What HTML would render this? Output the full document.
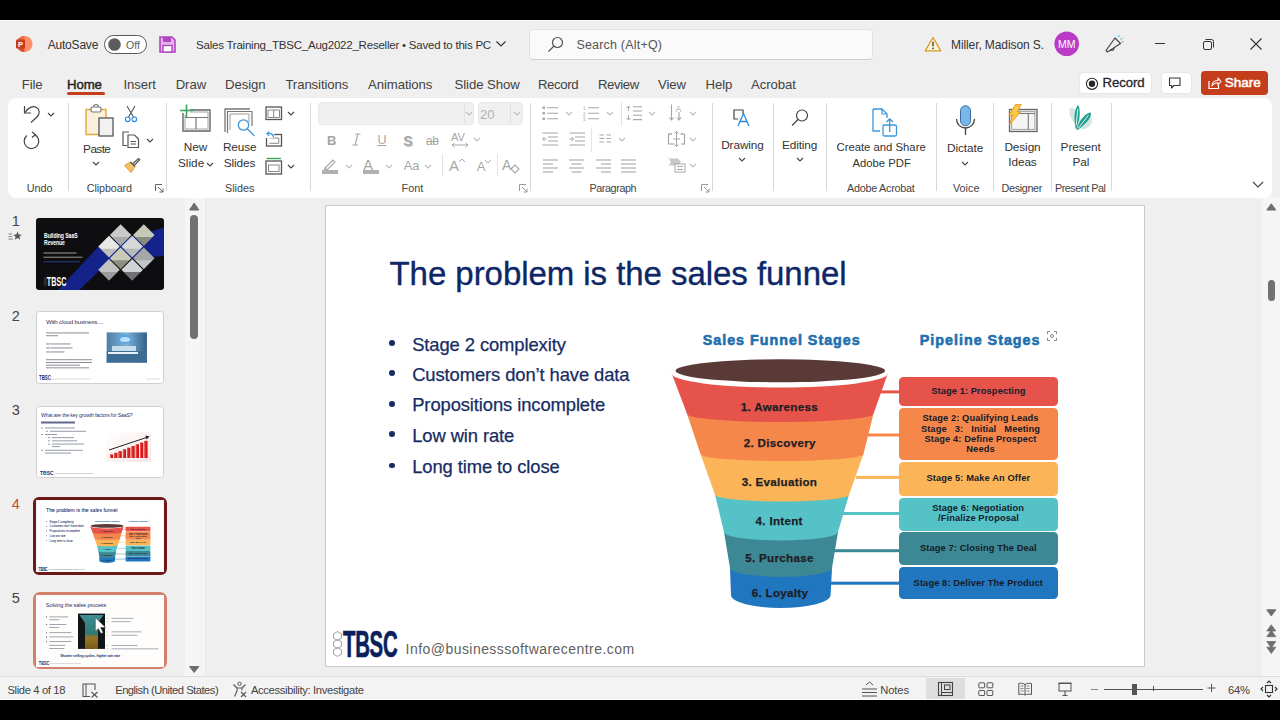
<!DOCTYPE html>
<html><head><meta charset="utf-8"><style>
html,body{margin:0;padding:0;width:1280px;height:720px;overflow:hidden;background:#efefef;font-family:"Liberation Sans", sans-serif;}
.t{position:absolute;white-space:nowrap;}
svg{display:block}
</style></head><body>
<div style="position:absolute;left:0px;top:0px;width:1280px;height:20px;background:#000;"></div><div style="position:absolute;left:0px;top:700px;width:1280px;height:20px;background:#000;"></div><div style="position:absolute;left:0px;top:20px;width:1280px;height:178px;background:#efefef;"></div><div style="position:absolute;left:0px;top:197px;width:1280px;height:480px;background:#efefef;"></div><div style="position:absolute;left:184.5px;top:197px;width:20px;height:480px;background:#f5f5f5;"></div><div style="position:absolute;left:204.5px;top:197px;width:1px;height:480px;background:#e9e9e9;"></div><div style="position:absolute;left:1262px;top:197px;width:18px;height:480px;background:#f5f5f5;"></div><div style="position:absolute;left:8px;top:98px;width:1264px;height:99.5px;background:#fff;border-radius:8px;"></div><svg style="position:absolute;left:15px;top:35px;overflow:visible;" width="18" height="18" viewBox="0 0 18 18"><circle cx="9.5" cy="9" r="8" fill="#ff8f6b"/><path d="M9.5 1 A8 8 0 0 0 1.5 9 L9.5 9 Z" fill="#ed6c47"/><path d="M1.5 9 A8 8 0 0 0 9.5 17 L9.5 9Z" fill="#d35230"/>
<rect x="1" y="4.5" width="9" height="9" rx="1.2" fill="#c43e1c"/><text x="5.5" y="12" font-size="7.5" font-weight="700" fill="#fff" text-anchor="middle" font-family="Liberation Sans">P</text></svg><div class="t" style="left:47.70px;top:38.94px;font-size:12px;line-height:12px;color:#333;font-weight:400;letter-spacing:-0.2px;">AutoSave</div><div style="position:absolute;left:104px;top:34.5px;width:43px;height:19px;background:#fff;border:1px solid #5a5a5a;border-radius:10px;box-sizing:border-box"></div><svg style="position:absolute;left:104px;top:34.5px;overflow:visible;" width="20" height="19" viewBox="0 0 20 19"><circle cx="10.5" cy="9.5" r="6.3" fill="#5c5c5c"/></svg><div class="t" style="left:126.00px;top:39.61px;font-size:10.5px;line-height:10.5px;color:#5c5c5c;font-weight:400;letter-spacing:0px;">Off</div><svg style="position:absolute;left:159px;top:36px;overflow:visible;" width="17" height="17" viewBox="0 0 17 17"><path d="M1 1 H13 L16 4 V16 H1 Z" fill="#e3b4ea" stroke="#b146c2" stroke-width="1.6"/>
<rect x="4" y="1" width="8" height="5" fill="#b146c2"/><rect x="4" y="9.5" width="9" height="6.5" fill="#fff" stroke="#b146c2" stroke-width="1.4"/></svg><div class="t" style="left:196.00px;top:39.57px;font-size:11.5px;line-height:11.5px;color:#333;font-weight:400;letter-spacing:-0.22px;">Sales Training_TBSC_Aug2022_Reseller • Saved to this PC</div><svg style="position:absolute;left:495px;top:40px;overflow:visible;" width="12" height="8" viewBox="0 0 12 8"><path d="M1.5 1.5 L6 6 L10.5 1.5" fill="none" stroke="#333" stroke-width="1.2"/></svg><div style="position:absolute;left:528.5px;top:28.5px;width:344px;height:31px;background:#fafafa;border:1px solid #e3e3e3;border-bottom-color:#cfcfcf;border-radius:4px;box-sizing:border-box"></div><svg style="position:absolute;left:547px;top:36px;overflow:visible;" width="18" height="18" viewBox="0 0 18 18"><circle cx="10.5" cy="6.5" r="5" fill="none" stroke="#555" stroke-width="1.2"/><path d="M7 10 L1.5 15.5" stroke="#555" stroke-width="1.3"/></svg><div class="t" style="left:576.40px;top:38.72px;font-size:12.5px;line-height:12.5px;color:#555;font-weight:400;letter-spacing:0.2px;">Search (Alt+Q)</div><svg style="position:absolute;left:924px;top:36px;overflow:visible;" width="18" height="16" viewBox="0 0 18 16"><path d="M9 1.5 L16.8 14.8 H1.2 Z" fill="#fff4d6" stroke="#d9972a" stroke-width="1.3" stroke-linejoin="round"/><path d="M9 5.8 V10.2" stroke="#333" stroke-width="1.3"/><circle cx="9" cy="12.4" r="0.8" fill="#333"/></svg><div class="t" style="left:951.00px;top:39.14px;font-size:12px;line-height:12px;color:#333;font-weight:400;letter-spacing:-0.1px;">Miller, Madison S.</div><svg style="position:absolute;left:1054px;top:31px;overflow:visible;" width="26" height="26" viewBox="0 0 26 26"><circle cx="12.7" cy="12.7" r="12.3" fill="#b93bc6"/><text x="12.7" y="16.6" font-size="10.5" fill="#fff" text-anchor="middle" font-family="Liberation Sans">MM</text></svg><svg style="position:absolute;left:1104px;top:34px;overflow:visible;" width="21" height="20" viewBox="0 0 21 20"><path d="M2 16.5 L11 4 L16.5 9.5 L3.5 18 Z" fill="none" stroke="#444" stroke-width="1.2" stroke-linejoin="round"/><path d="M6.2 15.8 A2.2 2.2 0 0 0 10 14" fill="none" stroke="#444" stroke-width="1.1"/>
<path d="M14.2 3.2 L15.2 1.2 M16.4 5.4 L18.4 4.2 M17.5 8 L19.6 7.8" stroke="#4aa8e0" stroke-width="1"/></svg><div style="position:absolute;left:1154.7px;top:43px;width:10.5px;height:1px;background:#333;"></div><svg style="position:absolute;left:1202px;top:38px;overflow:visible;" width="13" height="12" viewBox="0 0 13 12"><rect x="1.5" y="3.5" width="8" height="8" rx="1.5" fill="none" stroke="#333" stroke-width="1"/><path d="M3.5 1.5 H9.5 A2 2 0 0 1 11.5 3.5 V9.5" fill="none" stroke="#333" stroke-width="1"/></svg><svg style="position:absolute;left:1249px;top:37px;overflow:visible;" width="14" height="14" viewBox="0 0 14 14"><path d="M1.5 1.5 L12.5 12.5 M12.5 1.5 L1.5 12.5" stroke="#333" stroke-width="1.1"/></svg><div class="t" style="left:21.70px;top:77.53px;font-size:13.2px;line-height:13.2px;color:#424242;font-weight:400;letter-spacing:-0.1px;">File</div><div class="t" style="left:67.00px;top:77.53px;font-size:13.2px;line-height:13.2px;color:#262626;font-weight:400;letter-spacing:-0.1px;-webkit-text-stroke:0.45px #262626;">Home</div><div class="t" style="left:123.50px;top:77.53px;font-size:13.2px;line-height:13.2px;color:#424242;font-weight:400;letter-spacing:-0.1px;">Insert</div><div class="t" style="left:175.70px;top:77.53px;font-size:13.2px;line-height:13.2px;color:#424242;font-weight:400;letter-spacing:-0.1px;">Draw</div><div class="t" style="left:225.00px;top:77.53px;font-size:13.2px;line-height:13.2px;color:#424242;font-weight:400;letter-spacing:-0.1px;">Design</div><div class="t" style="left:285.40px;top:77.53px;font-size:13.2px;line-height:13.2px;color:#424242;font-weight:400;letter-spacing:-0.1px;">Transitions</div><div class="t" style="left:368.00px;top:77.53px;font-size:13.2px;line-height:13.2px;color:#424242;font-weight:400;letter-spacing:-0.1px;">Animations</div><div class="t" style="left:454.60px;top:77.53px;font-size:13.2px;line-height:13.2px;color:#424242;font-weight:400;letter-spacing:-0.1px;">Slide Show</div><div class="t" style="left:538.00px;top:77.53px;font-size:13.2px;line-height:13.2px;color:#424242;font-weight:400;letter-spacing:-0.4px;">Record</div><div class="t" style="left:598.00px;top:77.53px;font-size:13.2px;line-height:13.2px;color:#424242;font-weight:400;letter-spacing:-0.4px;">Review</div><div class="t" style="left:658.00px;top:77.53px;font-size:13.2px;line-height:13.2px;color:#424242;font-weight:400;letter-spacing:-0.1px;">View</div><div class="t" style="left:705.60px;top:77.53px;font-size:13.2px;line-height:13.2px;color:#424242;font-weight:400;letter-spacing:-0.1px;">Help</div><div class="t" style="left:751.00px;top:77.53px;font-size:13.2px;line-height:13.2px;color:#424242;font-weight:400;letter-spacing:-0.1px;">Acrobat</div><div style="position:absolute;left:67px;top:92px;width:37.6px;height:2.6px;background:#c43e1c;border-radius:1.5px"></div><div style="position:absolute;left:1078.6px;top:71.7px;width:73.4px;height:22.6px;background:#fff;border:1px solid #e6e6e6;border-radius:4px;box-sizing:border-box"></div><svg style="position:absolute;left:1085px;top:76.5px;overflow:visible;" width="14" height="14" viewBox="0 0 14 14"><circle cx="7" cy="6.8" r="5.6" fill="none" stroke="#262626" stroke-width="1.1"/><circle cx="7" cy="6.8" r="3.2" fill="#262626"/></svg><div class="t" style="left:1102.60px;top:76.13px;font-size:13.2px;line-height:13.2px;color:#262626;font-weight:400;letter-spacing:-0.1px;-webkit-text-stroke:0.3px #262626;">Record</div><div style="position:absolute;left:1161.4px;top:71.7px;width:30.6px;height:22.6px;background:#fff;border:1px solid #e6e6e6;border-radius:4px;box-sizing:border-box"></div><svg style="position:absolute;left:1168px;top:77px;overflow:visible;" width="14" height="12" viewBox="0 0 14 12"><path d="M1.5 1 H12 V8.5 H6 L3.5 11 V8.5 H1.5 Z" fill="none" stroke="#333" stroke-width="1.1" stroke-linejoin="round"/></svg><div style="position:absolute;left:1201px;top:71px;width:67px;height:23.6px;background:#c43e1c;border-radius:4px"></div><svg style="position:absolute;left:1207px;top:76px;overflow:visible;" width="14" height="14" viewBox="0 0 14 14"><path d="M2 5 V12.5 H11.5 V9" fill="none" stroke="#fff" stroke-width="1.2"/><path d="M5 10 C5 6 8 4.5 11 4.5 V2 L14 5.5 L11 9 V6.7 C8.5 6.7 6.5 7.5 5 10Z" fill="none" stroke="#fff" stroke-width="1.1" stroke-linejoin="round"/></svg><div class="t" style="left:1224.70px;top:76.37px;font-size:13.5px;line-height:13.5px;color:#fff;font-weight:400;letter-spacing:0px;-webkit-text-stroke:0.5px #fff;">Share</div><div style="position:absolute;left:67.5px;top:102.5px;width:1px;height:88.5px;background:#d9d9d9;"></div><div style="position:absolute;left:166px;top:102.5px;width:1px;height:88.5px;background:#d9d9d9;"></div><div style="position:absolute;left:309.5px;top:102.5px;width:1px;height:88.5px;background:#d9d9d9;"></div><div style="position:absolute;left:530px;top:102.5px;width:1px;height:88.5px;background:#d9d9d9;"></div><div style="position:absolute;left:712.3px;top:102.5px;width:1px;height:88.5px;background:#d9d9d9;"></div><div style="position:absolute;left:773px;top:102.5px;width:1px;height:88.5px;background:#d9d9d9;"></div><div style="position:absolute;left:826.4px;top:102.5px;width:1px;height:88.5px;background:#d9d9d9;"></div><div style="position:absolute;left:935.5px;top:102.5px;width:1px;height:88.5px;background:#d9d9d9;"></div><div style="position:absolute;left:993.4px;top:102.5px;width:1px;height:88.5px;background:#d9d9d9;"></div><div style="position:absolute;left:1051px;top:102.5px;width:1px;height:88.5px;background:#d9d9d9;"></div><div style="position:absolute;left:1110.5px;top:102.5px;width:1px;height:88.5px;background:#d9d9d9;"></div><div class="t" style="left:26.70px;top:183.26px;font-size:10.8px;line-height:10.8px;color:#444;font-weight:400;letter-spacing:0px;">Undo</div><div class="t" style="left:86.70px;top:183.26px;font-size:10.8px;line-height:10.8px;color:#444;font-weight:400;letter-spacing:-0.1px;">Clipboard</div><svg style="position:absolute;left:155px;top:184px;overflow:visible;" width="9" height="9" viewBox="0 0 9 9"><path d="M0.5 7 V0.5 H7" fill="none" stroke="#666" stroke-width="1"/><path d="M3 3 L8 8 M8 4.5 V8 H4.5" fill="none" stroke="#666" stroke-width="1"/></svg><div class="t" style="left:225.00px;top:183.26px;font-size:10.8px;line-height:10.8px;color:#444;font-weight:400;letter-spacing:0px;">Slides</div><div class="t" style="left:401.60px;top:183.26px;font-size:10.8px;line-height:10.8px;color:#444;font-weight:400;letter-spacing:0px;">Font</div><svg style="position:absolute;left:518.5px;top:184px;overflow:visible;" width="9" height="9" viewBox="0 0 9 9"><path d="M0.5 7 V0.5 H7" fill="none" stroke="#999" stroke-width="1"/><path d="M3 3 L8 8 M8 4.5 V8 H4.5" fill="none" stroke="#999" stroke-width="1"/></svg><div class="t" style="left:589.40px;top:183.26px;font-size:10.8px;line-height:10.8px;color:#444;font-weight:400;letter-spacing:-0.4px;">Paragraph</div><svg style="position:absolute;left:700.7px;top:184px;overflow:visible;" width="9" height="9" viewBox="0 0 9 9"><path d="M0.5 7 V0.5 H7" fill="none" stroke="#999" stroke-width="1"/><path d="M3 3 L8 8 M8 4.5 V8 H4.5" fill="none" stroke="#999" stroke-width="1"/></svg><div class="t" style="left:847.00px;top:183.26px;font-size:10.8px;line-height:10.8px;color:#444;font-weight:400;letter-spacing:-0.25px;">Adobe Acrobat</div><div class="t" style="left:953.00px;top:183.26px;font-size:10.8px;line-height:10.8px;color:#444;font-weight:400;letter-spacing:0px;">Voice</div><div class="t" style="left:1001.60px;top:183.26px;font-size:10.8px;line-height:10.8px;color:#444;font-weight:400;letter-spacing:-0.35px;">Designer</div><div class="t" style="left:1055.00px;top:183.26px;font-size:10.8px;line-height:10.8px;color:#444;font-weight:400;letter-spacing:-0.5px;">Present Pal</div><svg style="position:absolute;left:1251.7px;top:180.5px;overflow:visible;" width="12" height="7.0" viewBox="0 0 12 7.0"><path d="M1 1 L6.0 6.0 L11 1" fill="none" stroke="#444" stroke-width="1.1"/></svg><svg style="position:absolute;left:22px;top:104px;overflow:visible;" width="20" height="20" viewBox="0 0 20 20"><path d="M2.5 2 V9 H9" fill="none" stroke="#444" stroke-width="1.2"/><path d="M3 8.5 C6 3.5 11 1.5 14.5 3.5 C18 5.5 18 10 15 13 L9 18.5" fill="none" stroke="#444" stroke-width="1.2"/></svg><svg style="position:absolute;left:46.7px;top:111.5px;overflow:visible;" width="8" height="5.0" viewBox="0 0 8 5.0"><path d="M1 1 L4.0 4.0 L7 1" fill="none" stroke="#444" stroke-width="1.1"/></svg><svg style="position:absolute;left:22px;top:130px;overflow:visible;" width="20" height="20" viewBox="0 0 20 20"><path d="M10 2 L13.5 4.5 L10 7.5" fill="none" stroke="#444" stroke-width="1.2"/><path d="M12.5 4.6 A7.3 7.3 0 1 1 5 5.5" fill="none" stroke="#444" stroke-width="1.2"/></svg><svg style="position:absolute;left:84px;top:105px;overflow:visible;" width="31" height="33" viewBox="0 0 31 33"><path d="M2 4.5 H22 V29.5 H2 Z" fill="#fbf0dc" stroke="#e0a73d" stroke-width="1.4"/>
<rect x="7" y="2" width="10" height="5" rx="1.5" fill="#fff" stroke="#777" stroke-width="1.2"/><path d="M9.5 2 A2.5 2.5 0 0 1 14.5 2" fill="none" stroke="#777" stroke-width="1.2"/>
<rect x="15" y="13" width="14" height="18" fill="#f2f2f2" stroke="#555" stroke-width="1.3"/></svg><div class="t" style="left:-203.30px;width:600px;text-align:center;top:143.51px;font-size:11.8px;line-height:11.8px;color:#333;font-weight:400;letter-spacing:-0.6px;">Paste</div><svg style="position:absolute;left:92.0px;top:161.0px;overflow:visible;" width="8" height="5.0" viewBox="0 0 8 5.0"><path d="M1 1 L4.0 4.0 L7 1" fill="none" stroke="#444" stroke-width="1.1"/></svg><svg style="position:absolute;left:124px;top:105px;overflow:visible;" width="14" height="18" viewBox="0 0 14 18"><path d="M3 1 L9.5 12 M11 1 L4.5 12" stroke="#555" stroke-width="1.1"/><circle cx="3.7" cy="14.3" r="2.3" fill="none" stroke="#2b88d8" stroke-width="1.1"/><circle cx="10.3" cy="14.3" r="2.3" fill="none" stroke="#2b88d8" stroke-width="1.1"/></svg><svg style="position:absolute;left:122px;top:131px;overflow:visible;" width="18" height="18" viewBox="0 0 18 18"><path d="M5 14.5 H1 V1 H7" fill="none" stroke="#555" stroke-width="1.2"/><path d="M6 4 H12.5 L16.5 8 V16.5 H6 Z" fill="#fff" stroke="#555" stroke-width="1.2"/><path d="M8.5 10.5 H14 M8.5 13 H14" stroke="#555" stroke-width="1"/></svg><svg style="position:absolute;left:146.0px;top:137.5px;overflow:visible;" width="8" height="5.0" viewBox="0 0 8 5.0"><path d="M1 1 L4.0 4.0 L7 1" fill="none" stroke="#444" stroke-width="1.1"/></svg><svg style="position:absolute;left:123px;top:157px;overflow:visible;" width="18" height="17" viewBox="0 0 18 17"><path d="M1.5 8.5 L8 15.5 L12 9.5 L7.5 5 Z" fill="#f5c26b" stroke="#e0962d" stroke-width="1"/><path d="M7.5 5 L12 9.5" stroke="#555" stroke-width="1.3"/><path d="M10 6.5 L15.5 1.5 L16.8 2.8 L11.5 8" fill="none" stroke="#555" stroke-width="1.2"/></svg><svg style="position:absolute;left:179px;top:104px;overflow:visible;" width="33" height="29" viewBox="0 0 33 29"><path d="M4 9 V27 H31 V6 H11" fill="none" stroke="#666" stroke-width="1.4"/><path d="M6 11 V25 H29 V8 H11" fill="none" stroke="#999" stroke-width="0.9"/>
<path d="M6 13.5 H29 M17 13.5 V25" stroke="#777" stroke-width="1.2"/>
<path d="M7.5 0.5 V13 M1 6.5 H14" stroke="#3ca55c" stroke-width="1.6"/></svg><div class="t" style="left:-104.50px;width:600px;text-align:center;top:141.81px;font-size:11.8px;line-height:11.8px;color:#333;font-weight:400;letter-spacing:0px;">New</div><div class="t" style="left:178.00px;top:157.91px;font-size:11.8px;line-height:11.8px;color:#333;font-weight:400;letter-spacing:0px;">Slide</div><svg style="position:absolute;left:205.5px;top:161.5px;overflow:visible;" width="8" height="5.0" viewBox="0 0 8 5.0"><path d="M1 1 L4.0 4.0 L7 1" fill="none" stroke="#444" stroke-width="1.1"/></svg><svg style="position:absolute;left:224px;top:108px;overflow:visible;" width="32" height="30" viewBox="0 0 32 30"><path d="M1 24 V1 H26" fill="none" stroke="#777" stroke-width="1.3"/><path d="M3.5 25 V3.5 H28 V18" fill="none" stroke="#777" stroke-width="1.2"/>
<path d="M6 22 V6 H25 V14" fill="none" stroke="#999" stroke-width="1"/>
<circle cx="19.5" cy="17" r="5.2" fill="#fff" stroke="#3a96dd" stroke-width="1.3"/><path d="M23.3 20.8 L30.5 28" stroke="#3a96dd" stroke-width="1.3"/></svg><div class="t" style="left:-60.30px;width:600px;text-align:center;top:141.81px;font-size:11.8px;line-height:11.8px;color:#333;font-weight:400;letter-spacing:-0.1px;">Reuse</div><div class="t" style="left:-60.50px;width:600px;text-align:center;top:157.91px;font-size:11.8px;line-height:11.8px;color:#333;font-weight:400;letter-spacing:-0.1px;">Slides</div><svg style="position:absolute;left:265px;top:106px;overflow:visible;" width="18" height="15" viewBox="0 0 18 15"><rect x="1" y="1" width="15.5" height="12.5" fill="none" stroke="#555" stroke-width="1.3"/><path d="M3 4 H14.5 M3 4 V11.5 H14.5 V4 M8.7 4 V11.5" fill="none" stroke="#888" stroke-width="1"/></svg><svg style="position:absolute;left:286.7px;top:110.5px;overflow:visible;" width="8" height="5.0" viewBox="0 0 8 5.0"><path d="M1 1 L4.0 4.0 L7 1" fill="none" stroke="#444" stroke-width="1.1"/></svg><svg style="position:absolute;left:265px;top:131px;overflow:visible;" width="18" height="16" viewBox="0 0 18 16"><rect x="1.5" y="3.5" width="15" height="11.5" fill="none" stroke="#555" stroke-width="1.3"/><path d="M4.5 7 H13.8 V12.3 H4.5" fill="none" stroke="#888" stroke-width="1"/><rect x="0" y="0" width="9" height="7" fill="#fff"/><path d="M8.5 6.5 C8.5 3.5 6 1.8 2.2 2.6" fill="none" stroke="#3a96dd" stroke-width="1.2"/><path d="M4.2 0.6 L2 2.6 L4.2 4.8" fill="none" stroke="#3a96dd" stroke-width="1.2"/></svg><svg style="position:absolute;left:265px;top:157px;overflow:visible;" width="18" height="18" viewBox="0 0 18 18"><path d="M1.5 1.5 H16" stroke="#3ca55c" stroke-width="1.4"/><rect x="1" y="4" width="15.5" height="13" fill="none" stroke="#555" stroke-width="1.3"/><rect x="3.5" y="8" width="10.5" height="6.5" fill="none" stroke="#888" stroke-width="1"/></svg><svg style="position:absolute;left:286.7px;top:163.5px;overflow:visible;" width="8" height="5.0" viewBox="0 0 8 5.0"><path d="M1 1 L4.0 4.0 L7 1" fill="none" stroke="#444" stroke-width="1.1"/></svg><div style="position:absolute;left:318px;top:102.3px;width:156.4px;height:22.7px;background:#f0f0f0;border-radius:4px;border:1px solid #e8e8e8;box-sizing:border-box"></div><div style="position:absolute;left:463.6px;top:104px;width:1px;height:19px;background:#e3e3e3;"></div><svg style="position:absolute;left:465.0px;top:111.0px;overflow:visible;" width="8" height="5.0" viewBox="0 0 8 5.0"><path d="M1 1 L4.0 4.0 L7 1" fill="none" stroke="#bdbdbd" stroke-width="1.1"/></svg><div style="position:absolute;left:477.5px;top:102.3px;width:45.1px;height:22.7px;background:#f0f0f0;border-radius:4px;border:1px solid #e8e8e8;box-sizing:border-box"></div><div style="position:absolute;left:510px;top:104px;width:1px;height:19px;background:#e3e3e3;"></div><svg style="position:absolute;left:512.6px;top:111.0px;overflow:visible;" width="8" height="5.0" viewBox="0 0 8 5.0"><path d="M1 1 L4.0 4.0 L7 1" fill="none" stroke="#bdbdbd" stroke-width="1.1"/></svg><div class="t" style="left:480.00px;top:108.20px;font-size:13px;line-height:13px;color:#b0b0b0;font-weight:400;letter-spacing:0px;">20</div><div class="t" style="left:327.00px;top:134.40px;font-size:13px;line-height:13px;color:#a6a6a6;font-weight:700;letter-spacing:0px;">B</div><svg style="position:absolute;left:352px;top:132.5px;overflow:visible;" width="9" height="13" viewBox="0 0 9 13"><path d="M3.2 1 H8.5 M0.5 12 H5.8 M5.8 1 L3.2 12" fill="none" stroke="#a6a6a6" stroke-width="1.1"/></svg><div class="t" style="left:377.40px;top:134.32px;font-size:12.5px;line-height:12.5px;color:#a6a6a6;font-weight:400;letter-spacing:0px;text-decoration:underline;">U</div><div class="t" style="left:403.20px;top:134.05px;font-size:14px;line-height:14px;color:#a6a6a6;font-weight:700;letter-spacing:0px;text-shadow:1px 1px 1px #ccc;">S</div><div class="t" style="left:426.00px;top:134.74px;font-size:12px;line-height:12px;color:#a6a6a6;font-weight:400;letter-spacing:-0.5px;text-decoration:line-through;">ab</div><svg style="position:absolute;left:451px;top:131px;overflow:visible;" width="18" height="17" viewBox="0 0 18 17"><text x="0" y="10" font-size="11" fill="#a6a6a6" font-family="Liberation Sans">AV</text><path d="M1 14 H17 M3.5 11.8 L1 14 L3.5 16.2 M14.5 11.8 L17 14 L14.5 16.2" fill="none" stroke="#a6a6a6" stroke-width="1"/></svg><svg style="position:absolute;left:473.0px;top:137.0px;overflow:visible;" width="8" height="5.0" viewBox="0 0 8 5.0"><path d="M1 1 L4.0 4.0 L7 1" fill="none" stroke="#bdbdbd" stroke-width="1.1"/></svg><svg style="position:absolute;left:321px;top:157px;overflow:visible;" width="18" height="18" viewBox="0 0 18 18"><path d="M4 11 L12 3 L14 5 L6 13 Z M4 11 L3 14 L6 13" fill="none" stroke="#a6a6a6" stroke-width="1.1"/></svg><div style="position:absolute;left:322px;top:170px;width:16px;height:3.6px;background:#b0b0b0;"></div><svg style="position:absolute;left:344.6px;top:163.5px;overflow:visible;" width="8" height="5.0" viewBox="0 0 8 5.0"><path d="M1 1 L4.0 4.0 L7 1" fill="none" stroke="#bdbdbd" stroke-width="1.1"/></svg><div class="t" style="left:363.30px;top:157.63px;font-size:14.5px;line-height:14.5px;color:#a6a6a6;font-weight:400;letter-spacing:0px;">A</div><div style="position:absolute;left:363px;top:170px;width:15.7px;height:3.6px;background:#b0b0b0;"></div><svg style="position:absolute;left:385.0px;top:163.5px;overflow:visible;" width="8" height="5.0" viewBox="0 0 8 5.0"><path d="M1 1 L4.0 4.0 L7 1" fill="none" stroke="#bdbdbd" stroke-width="1.1"/></svg><div class="t" style="left:403.80px;top:160.06px;font-size:12.8px;line-height:12.8px;color:#a6a6a6;font-weight:400;letter-spacing:-0.2px;">Aa</div><svg style="position:absolute;left:423.7px;top:163.5px;overflow:visible;" width="8" height="5.0" viewBox="0 0 8 5.0"><path d="M1 1 L4.0 4.0 L7 1" fill="none" stroke="#bdbdbd" stroke-width="1.1"/></svg><div style="position:absolute;left:441.7px;top:154px;width:1px;height:22px;background:#e3e3e3;"></div><div class="t" style="left:449.00px;top:158.20px;font-size:15px;line-height:15px;color:#a6a6a6;font-weight:400;letter-spacing:0px;">A</div><svg style="position:absolute;left:458px;top:158px;overflow:visible;" width="8" height="5" viewBox="0 0 8 5"><path d="M1 4 L4 1 L7 4" fill="none" stroke="#aaa" stroke-width="1"/></svg><div class="t" style="left:476.80px;top:159.90px;font-size:13px;line-height:13px;color:#a6a6a6;font-weight:400;letter-spacing:0px;">A</div><svg style="position:absolute;left:484px;top:159px;overflow:visible;" width="8" height="5" viewBox="0 0 8 5"><path d="M1 1 L4 4 L7 1" fill="none" stroke="#aaa" stroke-width="1"/></svg><div style="position:absolute;left:497px;top:154px;width:1px;height:22px;background:#e3e3e3;"></div><svg style="position:absolute;left:502px;top:157px;overflow:visible;" width="18" height="17" viewBox="0 0 18 17"><text x="0" y="13" font-size="14" fill="#a6a6a6" font-family="Liberation Sans">A</text><path d="M9 12 L13 8 L17 12 L13 16 Z" fill="#fff" stroke="#a6a6a6" stroke-width="1.1"/></svg><svg style="position:absolute;left:542px;top:106px;overflow:visible;" width="17" height="14" viewBox="0 0 17 14"><rect x="0.5" y="0.5" width="2.5" height="2.5" fill="#aaa"/><rect x="0.5" y="6" width="2.5" height="2.5" fill="#aaa"/><rect x="0.5" y="11.5" width="2.5" height="2.5" fill="#aaa"/><path d="M5 1.7 H16 M5 7.2 H16 M5 12.7 H16" stroke="#a6a6a6" stroke-width="1.1"/></svg><svg style="position:absolute;left:565.3px;top:111.0px;overflow:visible;" width="8" height="5.0" viewBox="0 0 8 5.0"><path d="M1 1 L4.0 4.0 L7 1" fill="none" stroke="#bdbdbd" stroke-width="1.1"/></svg><svg style="position:absolute;left:583px;top:106px;overflow:visible;" width="17" height="14" viewBox="0 0 17 14"><text x="0" y="4" font-size="4.5" fill="#aaa" font-family="Liberation Sans">1</text><text x="0" y="9.5" font-size="4.5" fill="#aaa" font-family="Liberation Sans">2</text><text x="0" y="15" font-size="4.5" fill="#aaa" font-family="Liberation Sans">3</text><path d="M5 1.7 H16 M5 7.2 H16 M5 12.7 H16" stroke="#a6a6a6" stroke-width="1.1"/></svg><svg style="position:absolute;left:606.0px;top:111.0px;overflow:visible;" width="8" height="5.0" viewBox="0 0 8 5.0"><path d="M1 1 L4.0 4.0 L7 1" fill="none" stroke="#bdbdbd" stroke-width="1.1"/></svg><div style="position:absolute;left:620.5px;top:102px;width:1px;height:24px;background:#e3e3e3;"></div><svg style="position:absolute;left:626px;top:105px;overflow:visible;" width="17" height="16" viewBox="0 0 17 16"><path d="M2.5 1 V6 M0.5 3 L2.5 1 L4.5 3 M2.5 10 V15 M0.5 13 L2.5 15 L4.5 13" fill="none" stroke="#a6a6a6" stroke-width="1"/><path d="M7 1.7 H16 M7 6 H16 M7 10.3 H16 M7 14.6 H16" stroke="#a6a6a6" stroke-width="1.1"/></svg><svg style="position:absolute;left:647.7px;top:111.0px;overflow:visible;" width="8" height="5.0" viewBox="0 0 8 5.0"><path d="M1 1 L4.0 4.0 L7 1" fill="none" stroke="#bdbdbd" stroke-width="1.1"/></svg><svg style="position:absolute;left:669px;top:104px;overflow:visible;" width="17" height="18" viewBox="0 0 17 18"><path d="M2.5 0.5 V16 M0.2 13.5 L2.5 16 L4.8 13.5 M10 8 V16 M7.8 13.5 L10 16 L12.2 13.5" fill="none" stroke="#a6a6a6" stroke-width="1.1"/><text x="6.5" y="8" font-size="9" fill="#b0b0b0" font-family="Liberation Sans">A</text></svg><svg style="position:absolute;left:689.0px;top:111.0px;overflow:visible;" width="8" height="5.0" viewBox="0 0 8 5.0"><path d="M1 1 L4.0 4.0 L7 1" fill="none" stroke="#bdbdbd" stroke-width="1.1"/></svg><svg style="position:absolute;left:542px;top:132px;overflow:visible;" width="17" height="14" viewBox="0 0 17 14"><path d="M0.5 1 H16 M6 5 H16 M6 9 H16 M0.5 13 H16" stroke="#a6a6a6" stroke-width="1.1"/><path d="M4.5 7 H0.7 M2.5 5 L0.7 7 L2.5 9" fill="none" stroke="#a6a6a6" stroke-width="1"/></svg><svg style="position:absolute;left:569px;top:132px;overflow:visible;" width="17" height="14" viewBox="0 0 17 14"><path d="M0.5 1 H16 M6 5 H16 M6 9 H16 M0.5 13 H16" stroke="#a6a6a6" stroke-width="1.1"/><path d="M0.5 7 H4.5 M2.7 5 L4.5 7 L2.7 9" fill="none" stroke="#a6a6a6" stroke-width="1"/></svg><div style="position:absolute;left:590.6px;top:128px;width:1px;height:24px;background:#e3e3e3;"></div><svg style="position:absolute;left:599px;top:134px;overflow:visible;" width="13" height="10" viewBox="0 0 13 10"><path d="M0.5 1 H5 M0.5 4.5 H5 M0.5 8 H5 M7.5 1 H12 M7.5 4.5 H12 M7.5 8 H12" stroke="#a6a6a6" stroke-width="1"/></svg><svg style="position:absolute;left:618.0px;top:136.5px;overflow:visible;" width="8" height="5.0" viewBox="0 0 8 5.0"><path d="M1 1 L4.0 4.0 L7 1" fill="none" stroke="#bdbdbd" stroke-width="1.1"/></svg><svg style="position:absolute;left:668px;top:131px;overflow:visible;" width="17" height="16" viewBox="0 0 17 16"><rect x="0.5" y="3" width="16" height="10" fill="none" stroke="#a6a6a6" stroke-width="1" stroke-dasharray="3 9"/><path d="M0.5 3 V13 H4 M16.5 3 V13 H13 M0.5 3 H4 M16.5 3 H13" fill="none" stroke="#a6a6a6" stroke-width="1.2"/><path d="M8.5 0.5 V15.5 M6.5 2.5 L8.5 0.5 L10.5 2.5 M6.5 13.5 L8.5 15.5 L10.5 13.5 M5 8 H12" fill="none" stroke="#a6a6a6" stroke-width="1"/></svg><svg style="position:absolute;left:689.0px;top:136.5px;overflow:visible;" width="8" height="5.0" viewBox="0 0 8 5.0"><path d="M1 1 L4.0 4.0 L7 1" fill="none" stroke="#bdbdbd" stroke-width="1.1"/></svg><svg style="position:absolute;left:542.5px;top:159px;overflow:visible;" width="16" height="15" viewBox="0 0 16 15"><path d="M0 1 H15" stroke="#a6a6a6" stroke-width="1.1"/><path d="M0 5 H10" stroke="#a6a6a6" stroke-width="1.1"/><path d="M0 9 H15" stroke="#a6a6a6" stroke-width="1.1"/><path d="M0 13 H10" stroke="#a6a6a6" stroke-width="1.1"/></svg><svg style="position:absolute;left:569.3px;top:159px;overflow:visible;" width="16" height="15" viewBox="0 0 16 15"><path d="M0 1 H15" stroke="#a6a6a6" stroke-width="1.1"/><path d="M2.5 5 H12.5" stroke="#a6a6a6" stroke-width="1.1"/><path d="M0 9 H15" stroke="#a6a6a6" stroke-width="1.1"/><path d="M2.5 13 H12.5" stroke="#a6a6a6" stroke-width="1.1"/></svg><svg style="position:absolute;left:595.6px;top:159px;overflow:visible;" width="16" height="15" viewBox="0 0 16 15"><path d="M0 1 H15" stroke="#a6a6a6" stroke-width="1.1"/><path d="M5 5 H15" stroke="#a6a6a6" stroke-width="1.1"/><path d="M0 9 H15" stroke="#a6a6a6" stroke-width="1.1"/><path d="M5 13 H15" stroke="#a6a6a6" stroke-width="1.1"/></svg><svg style="position:absolute;left:621.4px;top:159px;overflow:visible;" width="16" height="15" viewBox="0 0 16 15"><path d="M0 1 H15" stroke="#a6a6a6" stroke-width="1.1"/><path d="M0 5 H15" stroke="#a6a6a6" stroke-width="1.1"/><path d="M0 9 H15" stroke="#a6a6a6" stroke-width="1.1"/><path d="M0 13 H15" stroke="#a6a6a6" stroke-width="1.1"/></svg><svg style="position:absolute;left:668px;top:157px;overflow:visible;" width="18" height="16" viewBox="0 0 18 16"><path d="M0.5 1.5 H10 L13 5 L10 8.5 H0.5 L3 5 Z" fill="#c8c8c8"/><rect x="7" y="7" width="10" height="8" fill="#fff" stroke="#a6a6a6" stroke-width="1"/><path d="M9 9.5 H15 M9 12.5 H15" stroke="#a6a6a6" stroke-width="1"/></svg><svg style="position:absolute;left:689.0px;top:162.5px;overflow:visible;" width="8" height="5.0" viewBox="0 0 8 5.0"><path d="M1 1 L4.0 4.0 L7 1" fill="none" stroke="#bdbdbd" stroke-width="1.1"/></svg><svg style="position:absolute;left:733px;top:109px;overflow:visible;" width="19" height="18" viewBox="0 0 19 18"><path d="M5 10 H1 V1 H10 V5" fill="none" stroke="#444" stroke-width="1.2"/><path d="M5 17 L10.5 4.5 L16 17 M7 12.5 H14" fill="none" stroke="#2b88d8" stroke-width="1.3"/></svg><div class="t" style="left:442.50px;width:600px;text-align:center;top:140.31px;font-size:11.8px;line-height:11.8px;color:#333;font-weight:400;letter-spacing:-0.1px;">Drawing</div><svg style="position:absolute;left:738.3px;top:157.3px;overflow:visible;" width="8" height="5.0" viewBox="0 0 8 5.0"><path d="M1 1 L4.0 4.0 L7 1" fill="none" stroke="#444" stroke-width="1.1"/></svg><svg style="position:absolute;left:791px;top:109px;overflow:visible;" width="18" height="17" viewBox="0 0 18 17"><circle cx="11" cy="6.5" r="5.5" fill="none" stroke="#444" stroke-width="1.2"/><path d="M7 10.5 L1 16.5" stroke="#444" stroke-width="1.3"/></svg><div class="t" style="left:499.60px;width:600px;text-align:center;top:140.31px;font-size:11.8px;line-height:11.8px;color:#333;font-weight:400;letter-spacing:-0.1px;">Editing</div><svg style="position:absolute;left:795.5px;top:157.3px;overflow:visible;" width="8" height="5.0" viewBox="0 0 8 5.0"><path d="M1 1 L4.0 4.0 L7 1" fill="none" stroke="#444" stroke-width="1.1"/></svg><svg style="position:absolute;left:872px;top:108px;overflow:visible;" width="26" height="30" viewBox="0 0 26 30"><path d="M1 1 H10 L15 6 V10 M1 1 V23 H8" fill="none" stroke="#3a96dd" stroke-width="1.3"/><path d="M10 1 V6 H15" fill="none" stroke="#3a96dd" stroke-width="1.2"/><rect x="11" y="17" width="13.5" height="11" rx="1.5" fill="none" stroke="#3a96dd" stroke-width="1.3"/><path d="M17.7 24 V11 M14.5 14 L17.7 11 L21 14" fill="#fff" stroke="#3a96dd" stroke-width="1.3"/></svg><div class="t" style="left:581.10px;width:600px;text-align:center;top:142.13px;font-size:11.3px;line-height:11.3px;color:#333;font-weight:400;letter-spacing:0px;">Create and Share</div><div class="t" style="left:581.60px;width:600px;text-align:center;top:158.33px;font-size:11.3px;line-height:11.3px;color:#333;font-weight:400;letter-spacing:0px;">Adobe PDF</div><svg style="position:absolute;left:955px;top:105px;overflow:visible;" width="22" height="31" viewBox="0 0 22 31"><rect x="5.5" y="0.8" width="10" height="20" rx="5" fill="#79b7e8" stroke="#3a6ea5" stroke-width="1"/><path d="M1.5 14 A9 9 0 0 0 19.5 14" fill="none" stroke="#444" stroke-width="1.3"/><path d="M10.5 23 V30" stroke="#444" stroke-width="1.3"/></svg><div class="t" style="left:665.10px;width:600px;text-align:center;top:142.91px;font-size:11.8px;line-height:11.8px;color:#333;font-weight:400;letter-spacing:-0.1px;">Dictate</div><svg style="position:absolute;left:960.7px;top:160.5px;overflow:visible;" width="8" height="5.0" viewBox="0 0 8 5.0"><path d="M1 1 L4.0 4.0 L7 1" fill="none" stroke="#444" stroke-width="1.1"/></svg><svg style="position:absolute;left:1006px;top:104px;overflow:visible;" width="32" height="29" viewBox="0 0 32 29"><rect x="3.5" y="5.5" width="27.5" height="22" fill="#f4f4f4" stroke="#666" stroke-width="1.3"/><rect x="5.6" y="7.6" width="23.3" height="17.8" fill="none" stroke="#a0a0a0" stroke-width="1"/><path d="M5.6 9.5 H29 M22.3 9.5 V25.4" stroke="#777" stroke-width="1.1"/><path d="M9.5 0.6 H15.2 L11.2 8 H14.6 L3.5 20.5 L7 11.2 H2.8 Z" fill="#f7c948" stroke="#e8951c" stroke-width="0.9" stroke-linejoin="round"/></svg><div class="t" style="left:722.50px;width:600px;text-align:center;top:141.61px;font-size:11.8px;line-height:11.8px;color:#333;font-weight:400;letter-spacing:-0.1px;">Design</div><div class="t" style="left:722.50px;width:600px;text-align:center;top:157.41px;font-size:11.8px;line-height:11.8px;color:#333;font-weight:400;letter-spacing:-0.1px;">Ideas</div><svg style="position:absolute;left:1066px;top:104px;overflow:visible;" width="30" height="29" viewBox="0 0 30 29"><ellipse cx="9" cy="12" rx="4.5" ry="9" transform="rotate(-28 9 12)" fill="#d3e6e3"/><ellipse cx="20" cy="19" rx="4.5" ry="7.5" transform="rotate(45 20 19)" fill="#d3e6e3"/><path d="M12 0.8 C15 6 14 15 10 26 C7.5 16 8 6 12 0.8 Z" fill="#1ea08f"/><path d="M24.5 8.5 C27 11 21 20 10.5 26.5 C12.5 18 18 9.5 24.5 8.5 Z" fill="#1ea08f"/><path d="M11.8 5 L10.2 21.5 M22.5 11 L12.5 24" stroke="#fff" stroke-width="0.9"/></svg><div class="t" style="left:780.60px;width:600px;text-align:center;top:141.61px;font-size:11.8px;line-height:11.8px;color:#333;font-weight:400;letter-spacing:-0.1px;">Present</div><div class="t" style="left:780.80px;width:600px;text-align:center;top:157.41px;font-size:11.8px;line-height:11.8px;color:#333;font-weight:400;letter-spacing:-0.1px;">Pal</div><div class="t" style="left:11.80px;top:214.23px;font-size:14.5px;line-height:14.5px;color:#444;font-weight:400;letter-spacing:0px;">1</div><div class="t" style="left:11.80px;top:308.73px;font-size:14.5px;line-height:14.5px;color:#444;font-weight:400;letter-spacing:0px;">2</div><div class="t" style="left:11.80px;top:402.73px;font-size:14.5px;line-height:14.5px;color:#444;font-weight:400;letter-spacing:0px;">3</div><div class="t" style="left:11.80px;top:496.73px;font-size:14.5px;line-height:14.5px;color:#c4502a;font-weight:400;letter-spacing:0px;">4</div><div class="t" style="left:11.80px;top:590.53px;font-size:14.5px;line-height:14.5px;color:#444;font-weight:400;letter-spacing:0px;">5</div><svg style="position:absolute;left:8px;top:231px;overflow:visible;" width="14" height="10" viewBox="0 0 14 10"><path d="M9.5 0.5 L10.7 3.6 L13.8 3.7 L11.4 5.7 L12.2 8.8 L9.5 7 L6.8 8.8 L7.6 5.7 L5.2 3.7 L8.3 3.6 Z" fill="#555"/><path d="M0.5 3 H4 M0.5 5.5 H4 M0.5 8 H5" stroke="#777" stroke-width="0.9"/></svg><svg style="position:absolute;left:36px;top:218px;overflow:visible;" width="128" height="72" viewBox="0 0 128 72"><defs><clipPath id="c1"><rect x="0" y="0" width="128" height="72" rx="3"/></clipPath></defs>
<g clip-path="url(#c1)">
<rect width="128" height="72" fill="#0e0e10"/>
<path d="M22 72 L62 29 L128 9.6 V38 L74 42.3 L43.4 72 Z" fill="#13238a"/><g transform="translate(96.2 28.6) rotate(45)"><rect x="-24.00" y="-7.60" width="15.2" height="15.2" fill="#c9cac8"/><path d="M-21.00 7.60 L-8.80 -4.60 L-8.80 7.60 Z" fill="#8d8f8c" opacity="0.55"/><rect x="-7.60" y="-24.00" width="15.2" height="15.2" fill="#c7c9b8"/><path d="M-4.60 -8.80 L7.60 -21.00 L7.60 -8.80 Z" fill="#55574e" opacity="0.55"/><rect x="-24.00" y="8.80" width="15.2" height="15.2" fill="#e8e8e6"/><path d="M-21.00 24.00 L-8.80 11.80 L-8.80 24.00 Z" fill="#9a9c9a" opacity="0.55"/><rect x="-7.60" y="-7.60" width="15.2" height="15.2" fill="#d6d8d8"/><path d="M-4.60 7.60 L7.60 -4.60 L7.60 7.60 Z" fill="#9fa2a3" opacity="0.55"/><rect x="-7.60" y="8.80" width="15.2" height="15.2" fill="#c9cbb8"/><path d="M-4.60 24.00 L7.60 11.80 L7.60 24.00 Z" fill="#5b5d52" opacity="0.55"/><rect x="8.80" y="-7.60" width="15.2" height="15.2" fill="#a5a8aa"/><path d="M11.80 7.60 L24.00 -4.60 L24.00 7.60 Z" fill="#dcdedf" opacity="0.55"/><rect x="-7.60" y="25.20" width="15.2" height="15.2" fill="#c2c2c0"/><path d="M-4.60 40.40 L7.60 28.20 L7.60 40.40 Z" fill="#7d7e7c" opacity="0.55"/><rect x="8.80" y="8.80" width="15.2" height="15.2" fill="#cfd2d6"/><path d="M11.80 24.00 L24.00 11.80 L24.00 24.00 Z" fill="#222" opacity="0.55"/></g><text x="8" y="20.5" font-size="6.6" font-weight="700" fill="#fff" font-family="Liberation Sans" letter-spacing="-0.1" transform="scale(0.78 1)" transform-origin="8 20.5">Building SaaS</text>
<text x="8" y="27" font-size="6.6" font-weight="700" fill="#fff" font-family="Liberation Sans" letter-spacing="-0.1" transform="scale(0.78 1)" transform-origin="8 27">Revenue</text>
<rect x="7.5" y="34.5" width="33" height="1" fill="#9a9a9a"/><rect x="7.5" y="38.7" width="39" height="1" fill="#9a9a9a"/><rect x="7.5" y="43.5" width="36" height="0.7" fill="#2a57c7"/><path d="M8.3 60 L9.5 59.3 L10.7 60 V61.4 L9.5 62.1 L8.3 61.4Z M8.3 62.8 L9.5 62.1 L10.7 62.8 V64.2 L9.5 64.9 L8.3 64.2Z M8.3 65.6 L9.5 64.9 L10.7 65.6 V67 L9.5 67.7 L8.3 67Z" fill="none" stroke="#999" stroke-width="0.3"/>
<text x="10.8" y="68.4" font-size="12.9" font-weight="700" fill="#fff" font-family="Liberation Sans" transform="scale(0.56 1)" transform-origin="10.8 68.4">TBSC</text>
</g></svg><svg style="position:absolute;left:36px;top:311.3px;overflow:visible;" width="128" height="73" viewBox="0 0 128 73"><rect x="0.5" y="0.5" width="127" height="72" rx="3" fill="#fff" stroke="#cfcfcf" stroke-width="1"/><text x="10" y="13.2" font-size="6.2" letter-spacing="-0.2" fill="#2a3560" font-family="Liberation Sans">With cloud business....</text><rect x="10" y="21.5" width="43" height="0.9" fill="#7d8088"/><rect x="10" y="24.3" width="12" height="0.9" fill="#7d8088"/><rect x="10" y="32.5" width="4" height="0.9" fill="#7d8088"/><rect x="14.5" y="32.5" width="20" height="0.9" fill="#7d8088"/><rect x="10" y="36.5" width="4" height="0.9" fill="#7d8088"/><rect x="14.5" y="36.5" width="22" height="0.9" fill="#7d8088"/><rect x="10" y="40.5" width="4" height="0.9" fill="#7d8088"/><rect x="14.5" y="40.5" width="14" height="0.9" fill="#7d8088"/><rect x="10" y="48.3" width="46" height="0.9" fill="#7d8088"/><rect x="10" y="51" width="46" height="0.9" fill="#7d8088"/><rect x="10" y="53.7" width="34" height="0.9" fill="#7d8088"/><rect x="10" y="56.4" width="43" height="0.9" fill="#7d8088"/><defs><linearGradient id="g2" x1="0" y1="0" x2="1" y2="0"><stop offset="0" stop-color="#4b7fa6"/><stop offset="0.5" stop-color="#7fb2d6"/><stop offset="1" stop-color="#2f5f88"/></linearGradient></defs><rect x="70.7" y="21.4" width="40.2" height="30.2" fill="url(#g2)"/><rect x="70.7" y="40" width="40.2" height="11.6" fill="#3d6c94"/><ellipse cx="89" cy="28" rx="8.5" ry="4.5" fill="#5aa6e0"/><ellipse cx="89" cy="28.5" rx="5" ry="2.5" fill="#bfe0f6"/><rect x="76" y="35" width="24" height="5" fill="#c7dcea"/><rect x="72" y="41" width="30" height="2" fill="#e8f1f7"/><text x="3" y="69.5" font-size="7" font-weight="700" fill="#1b2c6b" font-family="Liberation Sans" transform="scale(0.62 1)" transform-origin="3 69.5">TBSC</text><rect x="13" y="67.8" width="42" height="0.5" fill="#bbb"/><rect x="110" y="67.8" width="14" height="0.5" fill="#bbb"/></svg><svg style="position:absolute;left:36px;top:405.5px;overflow:visible;" width="128" height="73" viewBox="0 0 128 73"><rect x="0.5" y="0.5" width="127" height="71" rx="3" fill="#fff" stroke="#cfcfcf" stroke-width="1"/><text x="5" y="10.5" font-size="5.2" letter-spacing="-0.15" fill="#25346b" font-family="Liberation Sans">What are the key growth factors for SaaS?</text><text x="4" y="69" font-size="5" font-weight="700" fill="#1b2c6b" font-family="Liberation Sans">TBSC</text><rect x="19" y="67" width="38" height="0.7" fill="#bbb"/><rect x="5" y="15.6" width="34" height="1.2" fill="#3a4470"/><rect x="5" y="17.2" width="34" height="0.4" fill="#3a4470"/><rect x="5" y="21.5" width="2" height="0.9" fill="#8a90a2"/><rect x="9" y="21.5" width="30" height="0.9" fill="#8a90a2"/><rect x="10" y="24.8" width="2" height="0.9" fill="#8a90a2"/><rect x="14" y="24.8" width="36" height="0.9" fill="#8a90a2"/><rect x="5" y="28" width="2" height="0.9" fill="#8a90a2"/><rect x="9" y="28" width="12" height="0.9" fill="#8a90a2"/><rect x="12" y="31.2" width="2" height="0.9" fill="#8a90a2"/><rect x="16" y="31.2" width="22" height="0.9" fill="#8a90a2"/><rect x="12" y="34.4" width="2" height="0.9" fill="#8a90a2"/><rect x="16" y="34.4" width="25" height="0.9" fill="#8a90a2"/><rect x="12" y="37.6" width="2" height="0.9" fill="#8a90a2"/><rect x="16" y="37.6" width="32" height="0.9" fill="#8a90a2"/><rect x="16" y="40.2" width="8" height="0.9" fill="#8a90a2"/><rect x="5" y="43.8" width="2" height="0.9" fill="#8a90a2"/><rect x="9" y="43.8" width="38" height="0.9" fill="#8a90a2"/><rect x="9" y="46.6" width="26" height="0.9" fill="#8a90a2"/><defs><linearGradient id="g3" x1="0" y1="0" x2="1" y2="1"><stop offset="0" stop-color="#fff"/><stop offset="1" stop-color="#f7e6e6"/></linearGradient></defs><rect x="70" y="26" width="45" height="30" fill="url(#g3)"/><rect x="74.0" y="48.5" width="3.2" height="3.5" fill="#d11a1a"/><rect x="74.0" y="48.5" width="1" height="3.5" fill="#f05050"/><rect x="78.3" y="46.8" width="3.2" height="5.2" fill="#d11a1a"/><rect x="78.3" y="46.8" width="1" height="5.2" fill="#f05050"/><rect x="82.6" y="45.1" width="3.2" height="6.9" fill="#d11a1a"/><rect x="82.6" y="45.1" width="1" height="6.9" fill="#f05050"/><rect x="86.9" y="43.4" width="3.2" height="8.6" fill="#d11a1a"/><rect x="86.9" y="43.4" width="1" height="8.6" fill="#f05050"/><rect x="91.2" y="41.7" width="3.2" height="10.3" fill="#d11a1a"/><rect x="91.2" y="41.7" width="1" height="10.3" fill="#f05050"/><rect x="95.5" y="40.0" width="3.2" height="12.0" fill="#d11a1a"/><rect x="95.5" y="40.0" width="1" height="12.0" fill="#f05050"/><rect x="99.8" y="38.3" width="3.2" height="13.7" fill="#d11a1a"/><rect x="99.8" y="38.3" width="1" height="13.7" fill="#f05050"/><rect x="104.1" y="36.6" width="3.2" height="15.4" fill="#d11a1a"/><rect x="104.1" y="36.6" width="1" height="15.4" fill="#f05050"/><rect x="108.4" y="34.9" width="3.2" height="17.1" fill="#d11a1a"/><rect x="108.4" y="34.9" width="1" height="17.1" fill="#f05050"/><path d="M73 44 L112 31" stroke="#222" stroke-width="1"/><path d="M109.5 29.5 L113.5 30.6 L110.5 33.5Z" fill="#222"/></svg><div style="position:absolute;left:32.8px;top:497.2px;width:134.7px;height:77.8px;background:transparent;border:3px solid #6c1818;border-radius:6px;box-sizing:border-box"></div><div style="position:absolute;left:33px;top:591.5px;width:134px;height:77px;background:transparent;border:3.2px solid #d47f6c;border-radius:7px;box-sizing:border-box"></div><svg style="position:absolute;left:36px;top:594.5px;overflow:visible;" width="128" height="71.5" viewBox="0 0 128 71.5"><rect x="0" y="0" width="128" height="72" fill="#fffdfc"/><text x="9.8" y="12.2" font-size="5.6" letter-spacing="-0.12" fill="#1b2f68" font-family="Liberation Sans">Solving the sales process</text><circle cx="10.5" cy="21.9" r="0.55" fill="#555"/><rect x="13.3" y="21.5" width="19" height="0.8" fill="#8a8f99"/><rect x="13.3" y="24.4" width="10" height="0.8" fill="#8a8f99"/><circle cx="10.5" cy="29.5" r="0.55" fill="#555"/><rect x="13.3" y="29.1" width="17" height="0.8" fill="#8a8f99"/><rect x="13.3" y="32.2" width="10" height="0.8" fill="#8a8f99"/><circle cx="10.5" cy="37.699999999999996" r="0.55" fill="#555"/><rect x="13.3" y="37.3" width="22" height="0.8" fill="#8a8f99"/><circle cx="10.5" cy="41.9" r="0.55" fill="#555"/><rect x="13.3" y="41.5" width="24" height="0.8" fill="#8a8f99"/><circle cx="10.5" cy="46.6" r="0.55" fill="#555"/><rect x="13.3" y="46.2" width="22" height="0.8" fill="#8a8f99"/><rect x="13.3" y="49.9" width="16" height="0.8" fill="#8a8f99"/><rect x="13.3" y="53.2" width="15" height="0.8" fill="#8a8f99"/><defs><linearGradient id="g5" x1="0" y1="0" x2="0" y2="1"><stop offset="0" stop-color="#3f8c93"/><stop offset="0.55" stop-color="#2f7a78"/><stop offset="0.66" stop-color="#9a7424"/><stop offset="1" stop-color="#7a5a1a"/></linearGradient></defs><rect x="42" y="18.6" width="27" height="35.3" fill="#121616"/><path d="M43.5 20 H67.5 L62 28 V53.9 H49 V28 Z" fill="url(#g5)"/><circle cx="71.6" cy="23.299999999999997" r="0.45" fill="#666"/><rect x="75.5" y="22.9" width="22" height="0.75" fill="#8a8f99"/><circle cx="71.6" cy="26.799999999999997" r="0.45" fill="#666"/><rect x="75.5" y="26.4" width="19" height="0.75" fill="#8a8f99"/><circle cx="71.6" cy="36.9" r="0.45" fill="#666"/><rect x="75.5" y="36.5" width="30" height="0.75" fill="#8a8f99"/><circle cx="71.6" cy="40.199999999999996" r="0.45" fill="#666"/><rect x="75.5" y="39.8" width="26" height="0.75" fill="#8a8f99"/><circle cx="71.6" cy="50.5" r="0.45" fill="#666"/><rect x="75.5" y="50.1" width="26" height="0.75" fill="#8a8f99"/><circle cx="71.6" cy="53.9" r="0.45" fill="#666"/><rect x="75.5" y="53.5" width="47" height="0.75" fill="#8a8f99"/><text x="24.3" y="62.3" font-size="3.7" font-weight="700" letter-spacing="-0.17" fill="#2c3a7a" font-family="Liberation Sans">Shorter selling cycles, higher win rate</text><text x="2.8" y="70.3" font-size="5.2" font-weight="700" fill="#1b2c6b" font-family="Liberation Sans" transform="scale(0.75 1)" transform-origin="2.8 70.3">TBSC</text><rect x="13" y="68.5" width="32" height="0.5" fill="#bbb"/><path d="M59.3 22.6 L59.3 36.5 L62.3 33.6 L65 38.6 L67.2 37.6 L64.6 32.6 L69.6 32.4 Z" fill="#fff" stroke="#444" stroke-width="0.6" stroke-linejoin="round"/></svg><svg style="position:absolute;left:189px;top:202px;overflow:visible;" width="11" height="9" viewBox="0 0 11 9"><path d="M0.5 8 L5.2 1 L9.9 8 Z" fill="#6e6e6e" stroke="#6e6e6e" stroke-linejoin="round"/></svg><div style="position:absolute;left:190px;top:215px;width:8px;height:124px;background:#727272;border-radius:4px"></div><svg style="position:absolute;left:189px;top:666px;overflow:visible;" width="11" height="7" viewBox="0 0 11 7"><path d="M0.5 0.5 L5.2 6.5 L9.9 0.5 Z" fill="#6e6e6e" stroke="#6e6e6e" stroke-linejoin="round"/></svg><svg style="position:absolute;left:1266px;top:203px;overflow:visible;" width="11" height="8" viewBox="0 0 11 8"><path d="M0.8 7 L5.3 0.8 L9.8 7 Z" fill="#6e6e6e" stroke="#6e6e6e" stroke-linejoin="round"/></svg><div style="position:absolute;left:1267.5px;top:280px;width:7.7px;height:21px;background:#727272;border-radius:4px"></div><svg style="position:absolute;left:1266px;top:609px;overflow:visible;" width="11" height="8" viewBox="0 0 11 8"><path d="M0.8 0.8 L5.3 7 L9.8 0.8 Z" fill="#6e6e6e" stroke="#6e6e6e" stroke-linejoin="round"/></svg><svg style="position:absolute;left:1266px;top:623.5px;overflow:visible;" width="11" height="14" viewBox="0 0 11 14"><path d="M0.8 7 L5.3 0.8 L9.8 7 Z M0.8 12.7 L5.3 6.3 L9.8 12.7 Z" fill="#6e6e6e" stroke="#6e6e6e" stroke-width="0.8" stroke-linejoin="round"/></svg><svg style="position:absolute;left:1266px;top:641px;overflow:visible;" width="11" height="14" viewBox="0 0 11 14"><path d="M0.8 0.5 L5.3 6.8 L9.8 0.5 Z M0.8 6.2 L5.3 12.5 L9.8 6.2 Z" fill="#6e6e6e" stroke="#6e6e6e" stroke-width="0.8" stroke-linejoin="round"/></svg><div style="position:absolute;left:325px;top:205px;width:820px;height:461.5px;background:#fff;border:1px solid #c9c9c9;box-sizing:border-box"></div><div class="t" style="left:389.50px;top:256.87px;font-size:33px;line-height:33px;color:#0d2767;font-weight:400;letter-spacing:-0.05px;-webkit-text-stroke:0.35px #0d2767;">The problem is the sales funnel</div><div class="t" style="left:412.20px;top:335.52px;font-size:18.4px;line-height:18.4px;color:#172c63;font-weight:400;letter-spacing:-0.1px;-webkit-text-stroke:0.25px #172c63;">Stage 2 complexity</div><div style="position:absolute;left:389.1px;top:340.3px;width:5.8px;height:5.8px;background:#172c63;border-radius:50%"></div><div class="t" style="left:412.20px;top:365.52px;font-size:18.4px;line-height:18.4px;color:#172c63;font-weight:400;letter-spacing:-0.1px;-webkit-text-stroke:0.25px #172c63;">Customers don’t have data</div><div style="position:absolute;left:389.1px;top:370.3px;width:5.8px;height:5.8px;background:#172c63;border-radius:50%"></div><div class="t" style="left:412.20px;top:396.12px;font-size:18.4px;line-height:18.4px;color:#172c63;font-weight:400;letter-spacing:-0.1px;-webkit-text-stroke:0.25px #172c63;">Propositions incomplete</div><div style="position:absolute;left:389.1px;top:400.9px;width:5.8px;height:5.8px;background:#172c63;border-radius:50%"></div><div class="t" style="left:412.20px;top:426.62px;font-size:18.4px;line-height:18.4px;color:#172c63;font-weight:400;letter-spacing:-0.1px;-webkit-text-stroke:0.25px #172c63;">Low win rate</div><div style="position:absolute;left:389.1px;top:431.4px;width:5.8px;height:5.8px;background:#172c63;border-radius:50%"></div><div class="t" style="left:412.20px;top:457.72px;font-size:18.4px;line-height:18.4px;color:#172c63;font-weight:400;letter-spacing:-0.1px;-webkit-text-stroke:0.25px #172c63;">Long time to close</div><div style="position:absolute;left:389.1px;top:462.5px;width:5.8px;height:5.8px;background:#172c63;border-radius:50%"></div><div class="t" style="left:702.70px;top:333.30px;font-size:14.3px;line-height:14.3px;color:#1f70ae;font-weight:700;letter-spacing:1.0px;-webkit-text-stroke:0.6px #1f70ae;">Sales Funnel Stages</div><div class="t" style="left:919.80px;top:333.30px;font-size:14.3px;line-height:14.3px;color:#1f70ae;font-weight:700;letter-spacing:1.0px;-webkit-text-stroke:0.6px #1f70ae;">Pipeline Stages</div><svg style="position:absolute;left:1047px;top:330.5px;overflow:visible;" width="10" height="10" viewBox="0 0 10 10"><path d="M0.5 3 V0.5 H3 M7 0.5 H9.5 V3 M9.5 7 V9.5 H7 M3 9.5 H0.5 V7" fill="none" stroke="#777" stroke-width="0.9"/><circle cx="5" cy="5" r="1.5" fill="none" stroke="#777" stroke-width="0.9"/></svg><svg style="position:absolute;left:660px;top:350px;overflow:visible;" width="400" height="270" viewBox="0 0 400 270"><rect x="220" y="40.39999999999998" width="20" height="3" fill="#e5534b"/><rect x="208" y="83.5" width="32" height="3" fill="#f5874a"/><rect x="196" y="125.89999999999998" width="44" height="3" fill="#fbb558"/><rect x="183" y="162.0" width="57" height="3" fill="#54c2c7"/><rect x="172" y="199.20000000000005" width="68" height="3" fill="#3d8895"/><rect x="168" y="231.70000000000005" width="72" height="3" fill="#2176c0"/><path d="M70.0 218.0 L172.0 218.0 L170.6 245.0 A49.8 13.0 0 0 1 71.0 245.0 Z" fill="#2176c0"/><path d="M64.0 182.0 L178.0 182.0 L172.0 218.0 A51.0 9.0 0 0 1 70.0 218.0 Z" fill="#3d8895"/><path d="M55.0 144.7 L189.0 144.7 L178.0 182.0 A57.0 8.5 0 0 1 64.0 182.0 Z" fill="#54c2c7"/><path d="M40.5 104.0 L203.5 104.0 L189.0 144.7 A67.0 6.8 0 0 1 55.0 144.7 Z" fill="#fbb558"/><path d="M27.0 63.8 L213.5 63.8 L203.5 104.0 A81.5 7.0 0 0 1 40.5 104.0 Z" fill="#f5874a"/><path d="M11.5 23.0 L228.0 23.0 L213.5 63.8 A93.2 8.2 0 0 1 27.0 63.8 Z" fill="#e5534b"/><ellipse cx="119.79999999999995" cy="23.5" rx="108.2" ry="14" fill="#fff"/><ellipse cx="120.29999999999995" cy="20.80000000000001" rx="104.7" ry="11.5" fill="#5a3a36"/></svg><div class="t" style="left:479.40px;width:600px;text-align:center;top:400.78px;font-size:11.6px;line-height:11.6px;color:#1d1d24;font-weight:700;letter-spacing:0.3px;-webkit-text-stroke:0.25px #1d1d24;">1. Awareness</div><div class="t" style="left:479.80px;width:600px;text-align:center;top:437.18px;font-size:11.6px;line-height:11.6px;color:#1d1d24;font-weight:700;letter-spacing:0.3px;-webkit-text-stroke:0.25px #1d1d24;">2. Discovery</div><div class="t" style="left:479.50px;width:600px;text-align:center;top:476.38px;font-size:11.6px;line-height:11.6px;color:#1d1d24;font-weight:700;letter-spacing:0.3px;-webkit-text-stroke:0.25px #1d1d24;">3. Evaluation</div><div class="t" style="left:479.20px;width:600px;text-align:center;top:514.68px;font-size:11.6px;line-height:11.6px;color:#1d1d24;font-weight:700;letter-spacing:0.3px;-webkit-text-stroke:0.25px #1d1d24;">4. Intent</div><div class="t" style="left:479.50px;width:600px;text-align:center;top:552.48px;font-size:11.6px;line-height:11.6px;color:#1d1d24;font-weight:700;letter-spacing:0.3px;-webkit-text-stroke:0.25px #1d1d24;">5. Purchase</div><div class="t" style="left:480.00px;width:600px;text-align:center;top:586.78px;font-size:11.6px;line-height:11.6px;color:#1d1d24;font-weight:700;letter-spacing:0.3px;-webkit-text-stroke:0.25px #1d1d24;">6. Loyalty</div><div style="position:absolute;left:899px;top:377.3px;width:158.7px;height:29.19999999999999px;background:#e5534b;border-radius:4.5px"></div><div style="position:absolute;left:899px;top:407.5px;width:158.7px;height:52.5px;background:#f5874a;border-radius:4.5px"></div><div style="position:absolute;left:899px;top:461.7px;width:158.7px;height:34.30000000000001px;background:#fbb558;border-radius:4.5px"></div><div style="position:absolute;left:899px;top:497.7px;width:158.7px;height:32.900000000000034px;background:#54c2c7;border-radius:4.5px"></div><div style="position:absolute;left:899px;top:531.7px;width:158.7px;height:33.299999999999955px;background:#3d8895;border-radius:4.5px"></div><div style="position:absolute;left:899px;top:567.2px;width:158.7px;height:32.19999999999993px;background:#2176c0;border-radius:4.5px"></div><div class="t" style="left:678.40px;width:600px;text-align:center;top:387.33px;font-size:9.3px;line-height:9.3px;color:#161c28;font-weight:700;letter-spacing:0.1px;">Stage 1: Prospecting</div><div class="t" style="left:680.50px;width:600px;text-align:center;top:413.83px;font-size:9.3px;line-height:9.3px;color:#161c28;font-weight:700;letter-spacing:0.1px;">Stage 2: Qualifying Leads</div><div class="t" style="left:680.50px;width:600px;text-align:center;top:424.63px;font-size:9.3px;line-height:9.3px;color:#161c28;font-weight:700;letter-spacing:0.1px;">Stage&nbsp;&nbsp;&nbsp;3:&nbsp;&nbsp;&nbsp;Initial&nbsp;&nbsp;&nbsp;Meeting</div><div class="t" style="left:680.50px;width:600px;text-align:center;top:435.13px;font-size:9.3px;line-height:9.3px;color:#161c28;font-weight:700;letter-spacing:0.1px;">Stage 4: Define Prospect</div><div class="t" style="left:680.50px;width:600px;text-align:center;top:445.43px;font-size:9.3px;line-height:9.3px;color:#161c28;font-weight:700;letter-spacing:0.1px;">Needs</div><div class="t" style="left:678.40px;width:600px;text-align:center;top:474.13px;font-size:9.3px;line-height:9.3px;color:#161c28;font-weight:700;letter-spacing:0.1px;">Stage 5: Make An Offer</div><div class="t" style="left:678.20px;width:600px;text-align:center;top:503.83px;font-size:9.3px;line-height:9.3px;color:#161c28;font-weight:700;letter-spacing:0.1px;">Stage 6: Negotiation</div><div class="t" style="left:678.50px;width:600px;text-align:center;top:513.83px;font-size:9.3px;line-height:9.3px;color:#161c28;font-weight:700;letter-spacing:0.1px;">/Finalize Proposal</div><div class="t" style="left:678.40px;width:600px;text-align:center;top:543.83px;font-size:9.3px;line-height:9.3px;color:#161c28;font-weight:700;letter-spacing:0.1px;">Stage 7: Closing The Deal</div><div class="t" style="left:678.30px;width:600px;text-align:center;top:578.73px;font-size:9.3px;line-height:9.3px;color:#161c28;font-weight:700;letter-spacing:0.1px;">Stage 8: Deliver The Product</div><svg style="position:absolute;left:333px;top:631px;overflow:visible;" width="10" height="27" viewBox="0 0 10 27"><path d="M4.5 0.6 L8.4 2.8 V7.2 L4.5 9.4 L0.6 7.2 V2.8 Z M4.5 8.6 L8.4 10.8 V15.2 L4.5 17.4 L0.6 15.2 V10.8 Z M4.5 16.6 L8.4 18.8 V23.2 L4.5 25.4 L0.6 23.2 V18.8 Z" fill="none" stroke="#888" stroke-width="0.8"/></svg><div class="t" style="left:342.80px;top:626.59px;font-size:36.4px;line-height:36.4px;color:#0b1f5c;font-weight:700;letter-spacing:-0.5px;transform:scaleX(0.56);transform-origin:0 0;-webkit-text-stroke:0.7px #0b1f5c;">TBSC</div><div class="t" style="left:405.60px;top:642.05px;font-size:14px;line-height:14px;color:#5f5f5f;font-weight:400;letter-spacing:0.45px;">Info@businesssoftwarecentre.com</div><div style="position:absolute;left:36px;top:500px;width:128px;height:72px;overflow:hidden;background:#fff"><div style="position:absolute;left:0;top:0;width:820px;height:461px;transform:scale(0.15610);transform-origin:0 0"><div style="position:absolute;left:-325px;top:-205px;width:1280px;height:720px"><div style="position:absolute;left:325px;top:205px;width:820px;height:461.5px;background:#fff;border:1px solid #c9c9c9;box-sizing:border-box"></div><div class="t" style="left:389.50px;top:256.87px;font-size:33px;line-height:33px;color:#0d2767;font-weight:400;letter-spacing:-0.05px;-webkit-text-stroke:0.35px #0d2767;">The problem is the sales funnel</div><div class="t" style="left:412.20px;top:335.52px;font-size:18.4px;line-height:18.4px;color:#172c63;font-weight:400;letter-spacing:-0.1px;-webkit-text-stroke:0.25px #172c63;">Stage 2 complexity</div><div style="position:absolute;left:389.1px;top:340.3px;width:5.8px;height:5.8px;background:#172c63;border-radius:50%"></div><div class="t" style="left:412.20px;top:365.52px;font-size:18.4px;line-height:18.4px;color:#172c63;font-weight:400;letter-spacing:-0.1px;-webkit-text-stroke:0.25px #172c63;">Customers don’t have data</div><div style="position:absolute;left:389.1px;top:370.3px;width:5.8px;height:5.8px;background:#172c63;border-radius:50%"></div><div class="t" style="left:412.20px;top:396.12px;font-size:18.4px;line-height:18.4px;color:#172c63;font-weight:400;letter-spacing:-0.1px;-webkit-text-stroke:0.25px #172c63;">Propositions incomplete</div><div style="position:absolute;left:389.1px;top:400.9px;width:5.8px;height:5.8px;background:#172c63;border-radius:50%"></div><div class="t" style="left:412.20px;top:426.62px;font-size:18.4px;line-height:18.4px;color:#172c63;font-weight:400;letter-spacing:-0.1px;-webkit-text-stroke:0.25px #172c63;">Low win rate</div><div style="position:absolute;left:389.1px;top:431.4px;width:5.8px;height:5.8px;background:#172c63;border-radius:50%"></div><div class="t" style="left:412.20px;top:457.72px;font-size:18.4px;line-height:18.4px;color:#172c63;font-weight:400;letter-spacing:-0.1px;-webkit-text-stroke:0.25px #172c63;">Long time to close</div><div style="position:absolute;left:389.1px;top:462.5px;width:5.8px;height:5.8px;background:#172c63;border-radius:50%"></div><div class="t" style="left:702.70px;top:333.30px;font-size:14.3px;line-height:14.3px;color:#1f70ae;font-weight:700;letter-spacing:1.0px;-webkit-text-stroke:0.6px #1f70ae;">Sales Funnel Stages</div><div class="t" style="left:919.80px;top:333.30px;font-size:14.3px;line-height:14.3px;color:#1f70ae;font-weight:700;letter-spacing:1.0px;-webkit-text-stroke:0.6px #1f70ae;">Pipeline Stages</div><svg style="position:absolute;left:1047px;top:330.5px;overflow:visible;" width="10" height="10" viewBox="0 0 10 10"><path d="M0.5 3 V0.5 H3 M7 0.5 H9.5 V3 M9.5 7 V9.5 H7 M3 9.5 H0.5 V7" fill="none" stroke="#777" stroke-width="0.9"/><circle cx="5" cy="5" r="1.5" fill="none" stroke="#777" stroke-width="0.9"/></svg><svg style="position:absolute;left:660px;top:350px;overflow:visible;" width="400" height="270" viewBox="0 0 400 270"><rect x="220" y="40.39999999999998" width="20" height="3" fill="#e5534b"/><rect x="208" y="83.5" width="32" height="3" fill="#f5874a"/><rect x="196" y="125.89999999999998" width="44" height="3" fill="#fbb558"/><rect x="183" y="162.0" width="57" height="3" fill="#54c2c7"/><rect x="172" y="199.20000000000005" width="68" height="3" fill="#3d8895"/><rect x="168" y="231.70000000000005" width="72" height="3" fill="#2176c0"/><path d="M70.0 218.0 L172.0 218.0 L170.6 245.0 A49.8 13.0 0 0 1 71.0 245.0 Z" fill="#2176c0"/><path d="M64.0 182.0 L178.0 182.0 L172.0 218.0 A51.0 9.0 0 0 1 70.0 218.0 Z" fill="#3d8895"/><path d="M55.0 144.7 L189.0 144.7 L178.0 182.0 A57.0 8.5 0 0 1 64.0 182.0 Z" fill="#54c2c7"/><path d="M40.5 104.0 L203.5 104.0 L189.0 144.7 A67.0 6.8 0 0 1 55.0 144.7 Z" fill="#fbb558"/><path d="M27.0 63.8 L213.5 63.8 L203.5 104.0 A81.5 7.0 0 0 1 40.5 104.0 Z" fill="#f5874a"/><path d="M11.5 23.0 L228.0 23.0 L213.5 63.8 A93.2 8.2 0 0 1 27.0 63.8 Z" fill="#e5534b"/><ellipse cx="119.79999999999995" cy="23.5" rx="108.2" ry="14" fill="#fff"/><ellipse cx="120.29999999999995" cy="20.80000000000001" rx="104.7" ry="11.5" fill="#5a3a36"/></svg><div class="t" style="left:479.40px;width:600px;text-align:center;top:400.78px;font-size:11.6px;line-height:11.6px;color:#1d1d24;font-weight:700;letter-spacing:0.3px;-webkit-text-stroke:0.25px #1d1d24;">1. Awareness</div><div class="t" style="left:479.80px;width:600px;text-align:center;top:437.18px;font-size:11.6px;line-height:11.6px;color:#1d1d24;font-weight:700;letter-spacing:0.3px;-webkit-text-stroke:0.25px #1d1d24;">2. Discovery</div><div class="t" style="left:479.50px;width:600px;text-align:center;top:476.38px;font-size:11.6px;line-height:11.6px;color:#1d1d24;font-weight:700;letter-spacing:0.3px;-webkit-text-stroke:0.25px #1d1d24;">3. Evaluation</div><div class="t" style="left:479.20px;width:600px;text-align:center;top:514.68px;font-size:11.6px;line-height:11.6px;color:#1d1d24;font-weight:700;letter-spacing:0.3px;-webkit-text-stroke:0.25px #1d1d24;">4. Intent</div><div class="t" style="left:479.50px;width:600px;text-align:center;top:552.48px;font-size:11.6px;line-height:11.6px;color:#1d1d24;font-weight:700;letter-spacing:0.3px;-webkit-text-stroke:0.25px #1d1d24;">5. Purchase</div><div class="t" style="left:480.00px;width:600px;text-align:center;top:586.78px;font-size:11.6px;line-height:11.6px;color:#1d1d24;font-weight:700;letter-spacing:0.3px;-webkit-text-stroke:0.25px #1d1d24;">6. Loyalty</div><div style="position:absolute;left:899px;top:377.3px;width:158.7px;height:29.19999999999999px;background:#e5534b;border-radius:4.5px"></div><div style="position:absolute;left:899px;top:407.5px;width:158.7px;height:52.5px;background:#f5874a;border-radius:4.5px"></div><div style="position:absolute;left:899px;top:461.7px;width:158.7px;height:34.30000000000001px;background:#fbb558;border-radius:4.5px"></div><div style="position:absolute;left:899px;top:497.7px;width:158.7px;height:32.900000000000034px;background:#54c2c7;border-radius:4.5px"></div><div style="position:absolute;left:899px;top:531.7px;width:158.7px;height:33.299999999999955px;background:#3d8895;border-radius:4.5px"></div><div style="position:absolute;left:899px;top:567.2px;width:158.7px;height:32.19999999999993px;background:#2176c0;border-radius:4.5px"></div><div class="t" style="left:678.40px;width:600px;text-align:center;top:387.33px;font-size:9.3px;line-height:9.3px;color:#161c28;font-weight:700;letter-spacing:0.1px;">Stage 1: Prospecting</div><div class="t" style="left:680.50px;width:600px;text-align:center;top:413.83px;font-size:9.3px;line-height:9.3px;color:#161c28;font-weight:700;letter-spacing:0.1px;">Stage 2: Qualifying Leads</div><div class="t" style="left:680.50px;width:600px;text-align:center;top:424.63px;font-size:9.3px;line-height:9.3px;color:#161c28;font-weight:700;letter-spacing:0.1px;">Stage&nbsp;&nbsp;&nbsp;3:&nbsp;&nbsp;&nbsp;Initial&nbsp;&nbsp;&nbsp;Meeting</div><div class="t" style="left:680.50px;width:600px;text-align:center;top:435.13px;font-size:9.3px;line-height:9.3px;color:#161c28;font-weight:700;letter-spacing:0.1px;">Stage 4: Define Prospect</div><div class="t" style="left:680.50px;width:600px;text-align:center;top:445.43px;font-size:9.3px;line-height:9.3px;color:#161c28;font-weight:700;letter-spacing:0.1px;">Needs</div><div class="t" style="left:678.40px;width:600px;text-align:center;top:474.13px;font-size:9.3px;line-height:9.3px;color:#161c28;font-weight:700;letter-spacing:0.1px;">Stage 5: Make An Offer</div><div class="t" style="left:678.20px;width:600px;text-align:center;top:503.83px;font-size:9.3px;line-height:9.3px;color:#161c28;font-weight:700;letter-spacing:0.1px;">Stage 6: Negotiation</div><div class="t" style="left:678.50px;width:600px;text-align:center;top:513.83px;font-size:9.3px;line-height:9.3px;color:#161c28;font-weight:700;letter-spacing:0.1px;">/Finalize Proposal</div><div class="t" style="left:678.40px;width:600px;text-align:center;top:543.83px;font-size:9.3px;line-height:9.3px;color:#161c28;font-weight:700;letter-spacing:0.1px;">Stage 7: Closing The Deal</div><div class="t" style="left:678.30px;width:600px;text-align:center;top:578.73px;font-size:9.3px;line-height:9.3px;color:#161c28;font-weight:700;letter-spacing:0.1px;">Stage 8: Deliver The Product</div><svg style="position:absolute;left:333px;top:631px;overflow:visible;" width="10" height="27" viewBox="0 0 10 27"><path d="M4.5 0.6 L8.4 2.8 V7.2 L4.5 9.4 L0.6 7.2 V2.8 Z M4.5 8.6 L8.4 10.8 V15.2 L4.5 17.4 L0.6 15.2 V10.8 Z M4.5 16.6 L8.4 18.8 V23.2 L4.5 25.4 L0.6 23.2 V18.8 Z" fill="none" stroke="#888" stroke-width="0.8"/></svg><div class="t" style="left:342.80px;top:626.59px;font-size:36.4px;line-height:36.4px;color:#0b1f5c;font-weight:700;letter-spacing:-0.5px;transform:scaleX(0.56);transform-origin:0 0;-webkit-text-stroke:0.7px #0b1f5c;">TBSC</div><div class="t" style="left:405.60px;top:642.05px;font-size:14px;line-height:14px;color:#5f5f5f;font-weight:400;letter-spacing:0.45px;">Info@businesssoftwarecentre.com</div></div></div></div><div style="position:absolute;left:0px;top:677px;width:1280px;height:23px;background:#f3f3f3;"></div><div style="position:absolute;left:0px;top:676.3px;width:1280px;height:1px;background:#dcdcdc;"></div><div class="t" style="left:7.40px;top:684.72px;font-size:11.2px;line-height:11.2px;color:#444;font-weight:400;letter-spacing:-0.35px;">Slide 4 of 18</div><svg style="position:absolute;left:82px;top:683px;overflow:visible;" width="17" height="15" viewBox="0 0 17 15"><path d="M8 13.5 H1 V1 H13 V7" fill="none" stroke="#555" stroke-width="1.1"/><path d="M4 1 V13.5" stroke="#555" stroke-width="1"/><path d="M9.5 9 L15.5 14.5 M15.5 9 L9.5 14.5" stroke="#555" stroke-width="1.1"/></svg><div class="t" style="left:115.20px;top:684.72px;font-size:11.2px;line-height:11.2px;color:#444;font-weight:400;letter-spacing:-0.5px;">English (United States)</div><svg style="position:absolute;left:232px;top:681px;overflow:visible;" width="16" height="17" viewBox="0 0 16 17"><circle cx="7.5" cy="2.8" r="1.7" fill="none" stroke="#555" stroke-width="1"/><path d="M1.5 3.5 L5 7 V10 L2.5 15.5 M13.5 3.5 L10 7 V9.5 M5 7 H10" fill="none" stroke="#555" stroke-width="1.1" stroke-linejoin="round"/><path d="M9 11 L14 16 M14 11 L9 16" stroke="#555" stroke-width="1.1"/></svg><div class="t" style="left:250.90px;top:684.72px;font-size:11.2px;line-height:11.2px;color:#444;font-weight:400;letter-spacing:-0.33px;">Accessibility: Investigate</div><svg style="position:absolute;left:861px;top:681px;overflow:visible;" width="18" height="17" viewBox="0 0 18 17"><path d="M5 4 L8.5 1 L12 4" fill="none" stroke="#555" stroke-width="1"/><path d="M1 8 H16 M1 11.5 H16 M1 15 H16" stroke="#555" stroke-width="1"/></svg><div class="t" style="left:880.20px;top:684.72px;font-size:11.2px;line-height:11.2px;color:#444;font-weight:400;letter-spacing:-0.1px;">Notes</div><div style="position:absolute;left:925.6px;top:678px;width:39.6px;height:22px;background:#dedede;"></div><svg style="position:absolute;left:938px;top:682px;overflow:visible;" width="16" height="15" viewBox="0 0 16 15"><rect x="0.5" y="0.5" width="14" height="13" fill="none" stroke="#444" stroke-width="1.1"/><path d="M3.5 0.5 V13.5 M3.5 10.5 H14.5" stroke="#444" stroke-width="1"/><rect x="6.5" y="3" width="5.5" height="4.5" fill="none" stroke="#444" stroke-width="1"/></svg><svg style="position:absolute;left:977.5px;top:682px;overflow:visible;" width="16" height="15" viewBox="0 0 16 15"><rect x="0.8" y="0.8" width="5.8" height="5" rx="0.6" fill="none" stroke="#555" stroke-width="1"/><rect x="9" y="0.8" width="5.8" height="5" rx="0.6" fill="none" stroke="#555" stroke-width="1"/><rect x="0.8" y="8.5" width="5.8" height="5" rx="0.6" fill="none" stroke="#555" stroke-width="1"/><rect x="9" y="8.5" width="5.8" height="5" rx="0.6" fill="none" stroke="#555" stroke-width="1"/></svg><svg style="position:absolute;left:1017.5px;top:682px;overflow:visible;" width="15" height="14" viewBox="0 0 15 14"><path d="M7 2.5 C5 1 2.5 1 0.8 1.5 V12.5 C2.5 12 5 12 7 13 C9 12 11.5 12 13.5 12.5 V1.5 C11.5 1 9 1 7 2.5 Z M7 2.5 V13" fill="none" stroke="#555" stroke-width="1"/><path d="M2.5 4 H5.5 M2.5 6.5 H5.5 M2.5 9 H5.5 M8.5 4 H11.5 M8.5 6.5 H11.5 M8.5 9 H11.5" stroke="#555" stroke-width="0.7"/></svg><svg style="position:absolute;left:1057.5px;top:682px;overflow:visible;" width="14" height="15" viewBox="0 0 14 15"><rect x="1" y="1.5" width="12" height="7.5" fill="none" stroke="#555" stroke-width="1"/><path d="M0.5 1 H13.5 M7 9 V13.5 M4.5 13.5 H9.5" stroke="#555" stroke-width="1.1"/></svg><div style="position:absolute;left:1091.2px;top:688.5px;width:6.8px;height:1px;background:#888;"></div><div style="position:absolute;left:1103.6px;top:688.5px;width:99.1px;height:1.2px;background:#555;"></div><div style="position:absolute;left:1132px;top:683.8px;width:5.2px;height:11px;background:#555;"></div><div style="position:absolute;left:1152.8px;top:685.5px;width:1px;height:5px;background:#555;"></div><svg style="position:absolute;left:1207px;top:683px;overflow:visible;" width="9" height="10" viewBox="0 0 9 10"><path d="M4.5 1 V9 M0.5 5 H8.5" stroke="#555" stroke-width="1"/></svg><div class="t" style="left:1227.90px;top:684.72px;font-size:11.2px;line-height:11.2px;color:#444;font-weight:400;letter-spacing:-0.2px;">64%</div><svg style="position:absolute;left:1259.5px;top:680px;overflow:visible;" width="18" height="18" viewBox="0 0 18 18"><rect x="5.5" y="5.5" width="7" height="7" fill="none" stroke="#333" stroke-width="1.1"/><path d="M7 3 L9 1 L11 3 M7 15 L9 17 L11 15 M3 7 L1 9 L3 11 M15 7 L17 9 L15 11" fill="none" stroke="#333" stroke-width="1.1"/></svg><div style="position:absolute;left:0px;top:699px;width:1280px;height:1px;background:#fcfcfc;"></div><div style="position:absolute;left:0px;top:20px;width:1280px;height:1.2px;background:#fbfbfb;"></div>
</body></html>
